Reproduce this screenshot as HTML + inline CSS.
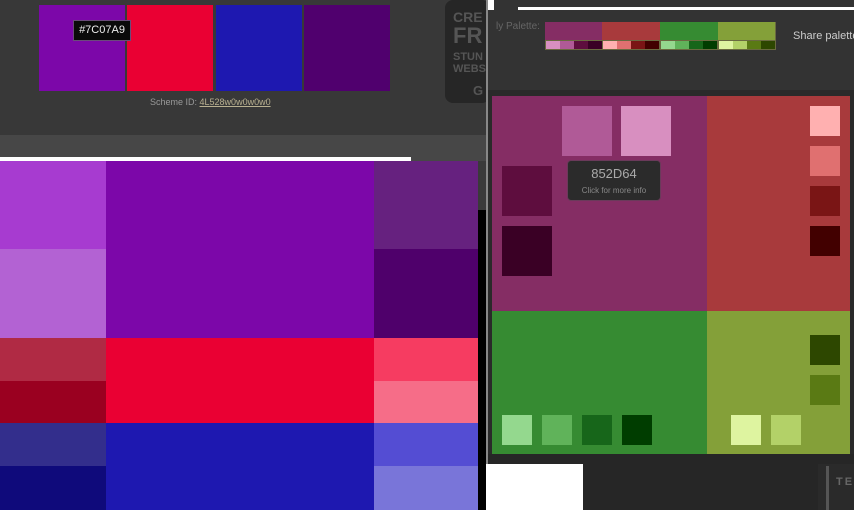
<!DOCTYPE html>
<html><head><meta charset="utf-8"><style>
*{margin:0;padding:0;box-sizing:border-box}
body{width:854px;height:510px;overflow:hidden;position:relative;background:#3a3a3a;font-family:"Liberation Sans",sans-serif}
div{position:absolute}
</style></head><body>
<!-- left top -->
<div style="left:0;top:0;width:486px;height:135px;background:#383838"></div>
<div style="left:0;top:135px;width:486px;height:26px;background:#474747"></div>
<div style="left:39px;top:5px;width:86px;height:86px;background:#7C07A9"></div>
<div style="left:127px;top:5px;width:86px;height:86px;background:#EA0033"></div>
<div style="left:216px;top:5px;width:86px;height:86px;background:#1E18B0"></div>
<div style="left:304px;top:5px;width:86px;height:86px;background:#50006E"></div>
<div style="left:73px;top:20px;width:58px;height:21px;background:#0a0a0a;border:1px solid #6a4a7a;color:#eee;font-size:11px;line-height:19px;text-align:center">#7C07A9</div>
<div style="left:150px;top:96px;width:160px;color:#999;font-size:9px;line-height:13px">Scheme ID: <span style="color:#b8b090;text-decoration:underline">4L528w0w0w0w0</span></div>
<div style="left:445px;top:0;width:45px;height:103px;background:#262626;border-radius:8px;overflow:hidden;color:#555;font-weight:bold">
<div style="left:8px;top:9px;font-size:14px">CRE</div>
<div style="left:8px;top:23px;font-size:22px">FR</div>
<div style="left:8px;top:51px;font-size:11px;line-height:12px">STUN<br>WEBS</div>
<div style="left:28px;top:83px;font-size:13px">G</div>
</div>
<div style="left:0;top:157px;width:411px;height:4px;background:#fff"></div>
<div style="left:478px;top:210px;width:8px;height:300px;background:#000"></div>
<!-- left grid -->
<div style="left:0;top:161px;width:106px;height:88px;background:#A73BD0"></div>
<div style="left:0;top:249px;width:106px;height:89px;background:#B362D3"></div>
<div style="left:0;top:338px;width:106px;height:43px;background:#B02A44"></div>
<div style="left:0;top:381px;width:106px;height:42px;background:#9A0020"></div>
<div style="left:0;top:423px;width:106px;height:43px;background:#332E8C"></div>
<div style="left:0;top:466px;width:106px;height:44px;background:#0F0A7B"></div>
<div style="left:106px;top:161px;width:268px;height:177px;background:#7C07A9"></div>
<div style="left:106px;top:338px;width:268px;height:85px;background:#EA0033"></div>
<div style="left:106px;top:423px;width:268px;height:87px;background:#1E18B0"></div>
<div style="left:374px;top:161px;width:104px;height:88px;background:#66217F"></div>
<div style="left:374px;top:249px;width:104px;height:89px;background:#4F006B"></div>
<div style="left:374px;top:338px;width:104px;height:43px;background:#F63C61"></div>
<div style="left:374px;top:381px;width:104px;height:42px;background:#F66D88"></div>
<div style="left:374px;top:423px;width:104px;height:43px;background:#544DD3"></div>
<div style="left:374px;top:466px;width:104px;height:44px;background:#7975D9"></div>
<!-- right -->
<div style="left:486px;top:0;width:368px;height:510px;background:#333"></div>
<div style="left:486px;top:0;width:2px;height:464px;background:#888"></div>
<div style="left:488px;top:0;width:6px;height:10px;background:#fff"></div>
<div style="left:518px;top:7px;width:336px;height:3px;background:#fff"></div>
<div style="left:496px;top:21px;color:#666;font-size:10px">ly Palette:</div>
<div style="left:545px;top:22px;width:231px;height:28px;background:#6a6a40"></div>
<div style="left:545px;top:22px;width:57px;height:18px;background:#852D64"></div>
<div style="left:602px;top:22px;width:58px;height:18px;background:#A83A3C"></div>
<div style="left:660px;top:22px;width:58px;height:18px;background:#368B32"></div>
<div style="left:718px;top:22px;width:57px;height:18px;background:#84A039"></div>
<div style="left:546px;top:41px;width:14px;height:8px;background:#D88FC0"></div>
<div style="left:560px;top:41px;width:14px;height:8px;background:#B05A97"></div>
<div style="left:574px;top:41px;width:14px;height:8px;background:#5E0D3E"></div>
<div style="left:588px;top:41px;width:14px;height:8px;background:#3A0025"></div>
<div style="left:603px;top:41px;width:14px;height:8px;background:#FFB0B0"></div>
<div style="left:617px;top:41px;width:14px;height:8px;background:#E07070"></div>
<div style="left:631px;top:41px;width:14px;height:8px;background:#7A1515"></div>
<div style="left:645px;top:41px;width:14px;height:8px;background:#420000"></div>
<div style="left:661px;top:41px;width:14px;height:8px;background:#94D88E"></div>
<div style="left:675px;top:41px;width:14px;height:8px;background:#60B35A"></div>
<div style="left:689px;top:41px;width:14px;height:8px;background:#17661A"></div>
<div style="left:703px;top:41px;width:14px;height:8px;background:#003D00"></div>
<div style="left:719px;top:41px;width:14px;height:8px;background:#DEF4A0"></div>
<div style="left:733px;top:41px;width:14px;height:8px;background:#B3D168"></div>
<div style="left:747px;top:41px;width:14px;height:8px;background:#5A7A14"></div>
<div style="left:761px;top:41px;width:14px;height:8px;background:#2D4700"></div>
<div style="left:793px;top:30px;color:#ccc;font-size:11px;white-space:nowrap">Share palette</div>
<div style="left:488px;top:90px;width:366px;height:374px;background:#2a2a2a"></div>
<div style="left:492px;top:96px;width:215px;height:215px;background:#852D64"></div>
<div style="left:707px;top:96px;width:143px;height:215px;background:#A83A3C"></div>
<div style="left:492px;top:311px;width:215px;height:143px;background:#368B32"></div>
<div style="left:707px;top:311px;width:143px;height:143px;background:#84A039"></div>
<div style="left:562px;top:106px;width:50px;height:50px;background:#B05A97"></div>
<div style="left:621px;top:106px;width:50px;height:50px;background:#D88FC0"></div>
<div style="left:502px;top:166px;width:50px;height:50px;background:#5E0D3E"></div>
<div style="left:502px;top:226px;width:50px;height:50px;background:#3A0025"></div>
<div style="left:567px;top:160px;width:94px;height:41px;background:#2b2b2b;border:1px solid #6a3a5a;border-radius:4px;text-align:center">
<div style="left:0;top:5px;width:92px;color:#aaa;font-size:13px">852D64</div>
<div style="left:0;top:25px;width:92px;color:#888;font-size:8px">Click for more info</div></div>
<div style="left:810px;top:106px;width:30px;height:30px;background:#FFB0B0"></div>
<div style="left:810px;top:146px;width:30px;height:30px;background:#E07070"></div>
<div style="left:810px;top:186px;width:30px;height:30px;background:#7A1515"></div>
<div style="left:810px;top:226px;width:30px;height:30px;background:#420000"></div>
<div style="left:502px;top:415px;width:30px;height:30px;background:#94D88E"></div>
<div style="left:542px;top:415px;width:30px;height:30px;background:#60B35A"></div>
<div style="left:582px;top:415px;width:30px;height:30px;background:#17661A"></div>
<div style="left:622px;top:415px;width:30px;height:30px;background:#003D00"></div>
<div style="left:731px;top:415px;width:30px;height:30px;background:#DEF4A0"></div>
<div style="left:771px;top:415px;width:30px;height:30px;background:#B3D168"></div>
<div style="left:810px;top:335px;width:30px;height:30px;background:#2D4700"></div>
<div style="left:810px;top:375px;width:30px;height:30px;background:#5A7A14"></div>
<div style="left:488px;top:454px;width:366px;height:56px;background:#262626"></div>
<div style="left:486px;top:464px;width:97px;height:46px;background:#fff"></div>
<div style="left:818px;top:464px;width:36px;height:46px;background:#2a2a2a"></div>
<div style="left:826px;top:466px;width:3px;height:44px;background:#555"></div>
<div style="left:836px;top:476px;color:#666;font-size:11px;font-weight:bold;letter-spacing:2px">TE</div>
</body></html>
